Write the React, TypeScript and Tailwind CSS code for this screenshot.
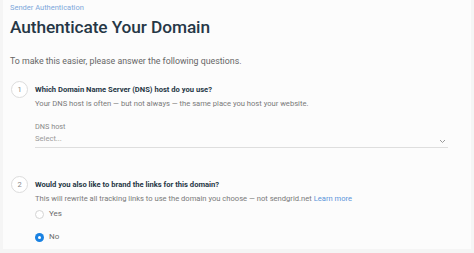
import React from "react";

function StepCircle({ n }: { n: number }) {
  return (
    <div className="w-[17px] h-[17px] shrink-0 rounded-full border border-[#dcdcdc] bg-white flex items-center justify-center text-[7.5px] text-[#8a8a8a]">
      {n}
    </div>
  );
}

function Radio({ checked, label }: { checked?: boolean; label: string }) {
  return (
    <div className="flex items-center gap-[5px]">
      {checked ? (
        <div className="w-[9px] h-[9px] rounded-full bg-[#1a82e2] flex items-center justify-center">
          <div className="w-[3px] h-[3px] rounded-full bg-white" />
        </div>
      ) : (
        <div className="w-[9px] h-[9px] rounded-full border border-[#d4d4d4] bg-white" />
      )}
      <span className="text-[8px] text-[#6b6b6b]">{label}</span>
    </div>
  );
}

export default function App() {
  return (
    <div
      className="w-[474px] h-[253px] bg-[#f5f5f5] overflow-hidden px-[3px] pb-[4px]"
      style={{ fontFamily: "Roboto, 'Noto Sans', sans-serif" }}
    >
      <div className="h-full bg-[#fcfcfc] pl-[7px] pr-[23px] pt-[2px]">
        <div className="text-[7.5px] text-[#7ea8db] leading-[12px]">Sender Authentication</div>
        <h1 className="text-[17.3px] font-medium text-[#263746] leading-[26px] tracking-[-0.1px]">
          Authenticate Your Domain
        </h1>
        <p className="mt-[14px] text-[8.8px] text-[#666] leading-[14px]">
          To make this easier, please answer the following questions.
        </p>

        <div className="mt-[13px] flex gap-[7px] pl-[1px]">
          <StepCircle n={1} />
          <div className="flex-1 pt-[3px]">
            <div className="text-[7.6px] font-bold text-[#263746] leading-[12px]">
              Which Domain Name Server (DNS) host do you use?
            </div>
            <div className="mt-[2px] text-[7.6px] text-[#7a7a7a] leading-[12px]">
              Your DNS host is often — but not always — the same place you host your website.
            </div>
            <div className="mt-[11px] text-[7.3px] text-[#8a8a8a] leading-[11px]">DNS host</div>
            <div className="mt-[1px] flex items-center justify-between border-b border-[#dedede] pb-[2px]">
              <span className="text-[7.6px] text-[#9a9a9a] leading-[12px]">Select...</span>
              <svg width="7" height="5" viewBox="0 0 7 5" className="mr-[2px] mt-[4px]">
                <path d="M1 1 L3.5 3.5 L6 1" fill="none" stroke="#9a9a9a" strokeWidth="1" />
              </svg>
            </div>
          </div>
        </div>

        <div className="mt-[28px] flex gap-[7px] pl-[1px]">
          <StepCircle n={2} />
          <div className="flex-1 pt-[3px]">
            <div className="text-[7.6px] font-bold text-[#263746] leading-[12px]">
              Would you also like to brand the links for this domain?
            </div>
            <div className="mt-[2px] text-[7.6px] text-[#7a7a7a] leading-[12px]">
              This will rewrite all tracking links to use the domain you choose — not sendgrid.net{" "}
              <span className="text-[#5b95da]">Learn more</span>
            </div>
            <div className="mt-[3px] flex flex-col gap-[11px]">
              <Radio label="Yes" />
              <Radio checked label="No" />
            </div>
          </div>
        </div>
      </div>
    </div>
  );
}
